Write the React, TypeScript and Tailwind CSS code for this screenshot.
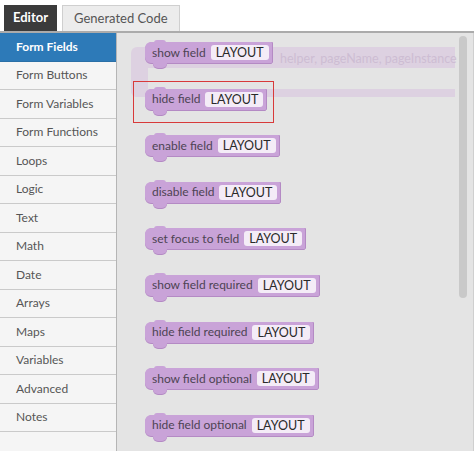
import React from "react";

const categories = [
  "Form Fields",
  "Form Buttons",
  "Form Variables",
  "Form Functions",
  "Loops",
  "Logic",
  "Text",
  "Math",
  "Date",
  "Arrays",
  "Maps",
  "Variables",
  "Advanced",
  "Notes",
  "",
];

const blocks = [
  "show field",
  "hide field",
  "enable field",
  "disable field",
  "set focus to field",
  "show field required",
  "hide field required",
  "show field optional",
  "hide field optional",
];

function Block({ label }: { label: string }) {
  return (
    <div className="relative self-start">
      {/* top notch */}
      <div className="absolute left-[9px] -top-[2px] h-[3px] w-[12px] rounded-t-[3px] bg-[#c9a3d8]" />
      <div className="relative flex h-[21px] items-center gap-[5px] rounded-l-[6px] rounded-r-[1px] bg-[#c9a3d8] pl-[7px] pr-[3px] shadow-[0_1px_0_#b48ac4,1px_0_0_#b48ac4]">
        <span className="text-[12px] text-[#4d4353]">{label}</span>
        <span className="rounded-[3px] bg-[#f4ecf7] px-[5px] text-[12.5px] leading-[15px] text-[#2a2a2a]">LAYOUT</span>
      </div>
      {/* bottom tab */}
      <div className="absolute left-[8px] top-[21px] h-[5px] w-[14px] rounded-b-[6px] bg-[#c9a3d8] shadow-[0_1px_0_#b48ac4]" />
    </div>
  );
}

export default function App() {
  return (
    <div className="h-[451px] w-[474px] overflow-hidden bg-white font-['Lato','Open_Sans',sans-serif]">
      <div className="flex h-[31px] items-end pl-[4px]">
        <div className="flex h-[26px] items-center bg-[#3b3b3b] px-[9px] text-[13px] font-bold text-white">Editor</div>
        <div className="ml-[5px] flex h-[26px] items-center border border-b-0 border-[#cfcfcf] bg-[#ececec] px-[11px] text-[13px] text-[#555]">
          Generated Code
        </div>
      </div>
      <div className="flex h-[420px] border-t-2 border-[#ababab]">
        <div className="w-[117px] shrink-0 border-r border-[#b5b5b5] bg-[#f5f5f5]">
          {categories.map((c, i) => (
            <div
              key={i}
              className={
                i === 0
                  ? "flex h-[28.5px] items-center border-b border-[#2a6fa6] bg-[#2d7ab8] pl-[16px] text-[12px] font-bold text-white"
                  : "flex h-[28.5px] items-center border-b border-[#cacaca] pl-[16px] text-[12px] text-[#555]"
              }
            >
              {c}
            </div>
          ))}
        </div>
        <div className="relative flex-1 border-r border-[#cfcfcf] bg-[#e4e4e4]">
          {/* faded ghost block */}
          <div className="absolute left-[14px] top-[14px] h-[21px] w-[324px] rounded-tl-[6px] bg-[#ddd1e1]" />
          <div className="absolute left-[14px] top-[35px] h-[29px] w-[17px] rounded-bl-[6px] bg-[#ddd1e1]" />
          <div className="absolute left-[14px] top-[56px] h-[8px] w-[324px] rounded-bl-[6px] bg-[#ddd1e1]" />
          <div className="absolute left-[163px] top-[17px] text-[12.5px] text-[#cdbdd3]">helper, pageName, pageInstance</div>

          <div className="relative flex flex-col gap-[25.6px] pl-[28px] pt-[9px]">
            {blocks.map((b) => (
              <Block key={b} label={b} />
            ))}
          </div>

          {/* selection outline */}
          <div className="absolute left-[16px] top-[48px] h-[42px] w-[141px] border border-[#d83a3a]" />

          {/* scrollbar */}
          <div className="absolute right-[6px] top-[3px] h-[262px] w-[8px] rounded-[4px] bg-[#c9c9c9]" />
        </div>
      </div>
    </div>
  );
}
